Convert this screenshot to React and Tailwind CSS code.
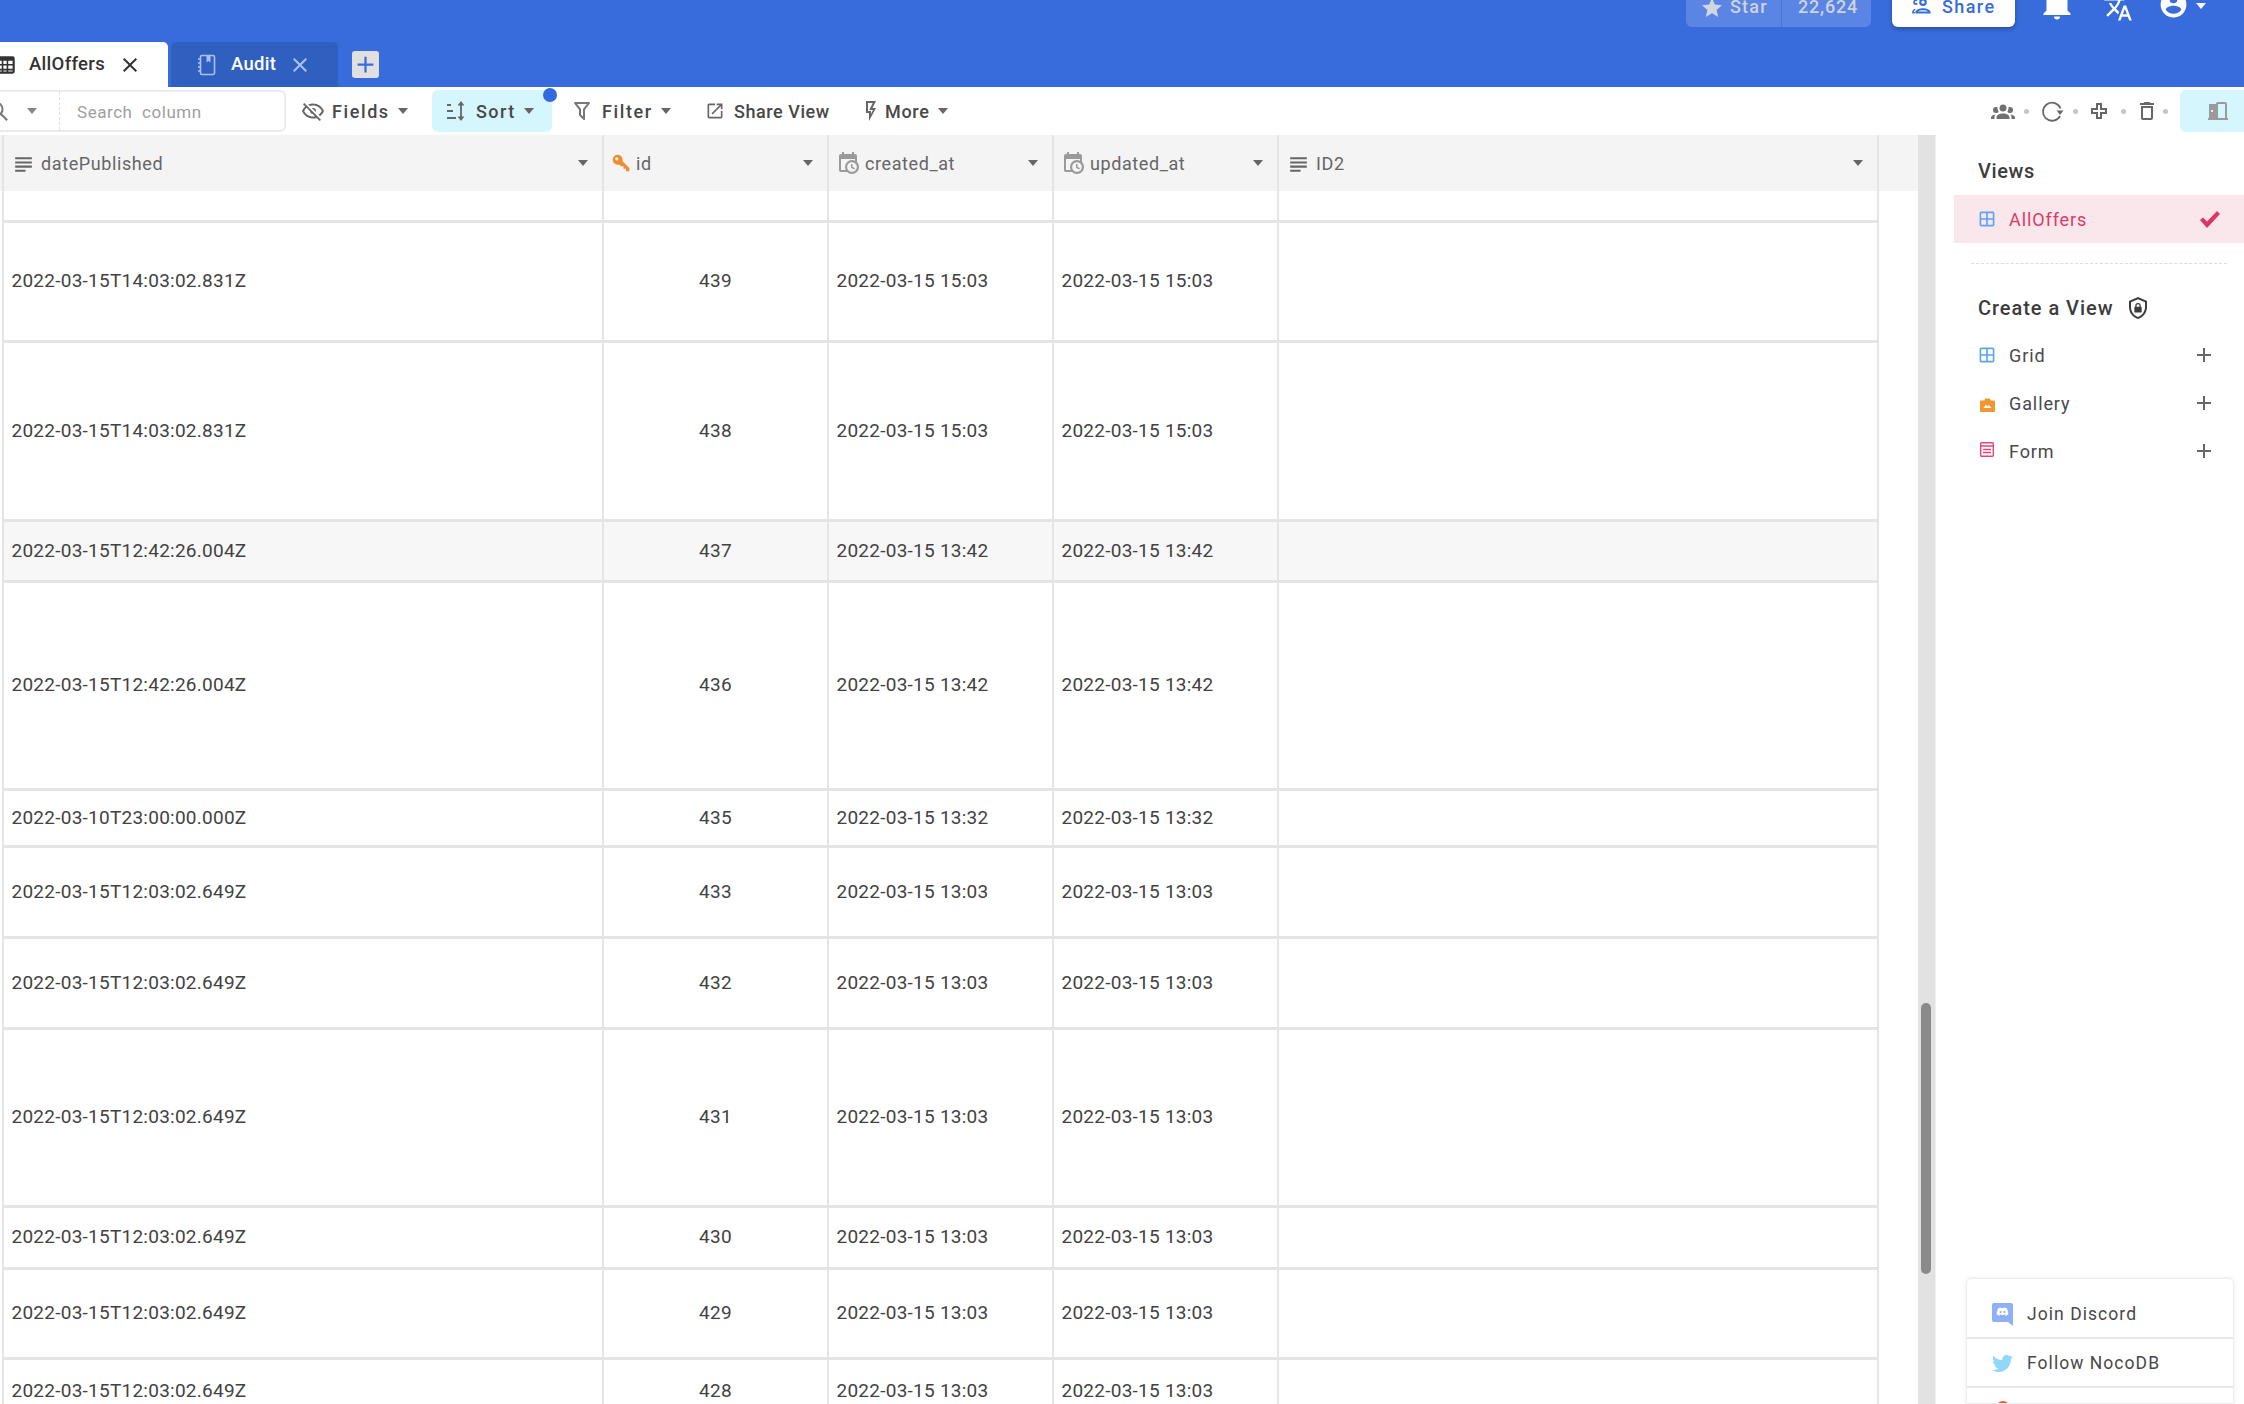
import React from "react";
import { FaTwitter } from "react-icons/fa";

const P = {
  text: "M4,6H20V8H4V6M4,10H20V12H4V10M4,14H20V16H4V14M4,18H14V20H4V18Z",
  key: "M22,18V22H18V19H15V16H12L9.74,13.74C9.19,13.91 8.61,14 8,14A6,6 0 0,1 2,8A6,6 0 0,1 8,2A6,6 0 0,1 14,8C14,8.61 13.91,9.19 13.74,9.74L22,18M7,5A2,2 0 0,0 5,7A2,2 0 0,0 7,9A2,2 0 0,0 9,7A2,2 0 0,0 7,5Z",
  cal: "M15,13H16.5V15.82L18.94,17.23L18.19,18.53L15,16.69V13M19,8H5V19H9.67C9.24,18.09 9,17.07 9,16A7,7 0 0,1 16,9C17.07,9 18.09,9.24 19,9.67V8M5,21C3.89,21 3,20.1 3,19V5C3,3.89 3.89,3 5,3H6V1H8V3H16V1H18V3H19A2,2 0 0,1 21,5V11.1C22.24,12.36 23,14.09 23,16A7,7 0 0,1 16,23C14.09,23 12.36,22.24 11.1,21H5M16,11.15A4.85,4.85 0 0,0 11.15,16C11.15,18.68 13.32,20.85 16,20.85A4.85,4.85 0 0,0 20.85,16C20.85,13.32 18.68,11.15 16,11.15Z",
  eye: "M2,5.27L3.28,4L20,20.72L18.73,22L15.65,18.92C14.5,19.3 13.28,19.5 12,19.5C7,19.5 2.73,16.39 1,12C1.69,10.24 2.79,8.69 4.19,7.46L2,5.27M12,9A3,3 0 0,1 15,12C15,12.35 14.94,12.69 14.83,13L11,9.17C11.31,9.06 11.65,9 12,9M12,4.5C17,4.5 21.27,7.61 23,12C22.18,14.08 20.79,15.88 19,17.19L17.58,15.76C18.94,14.82 20.06,13.54 20.82,12C19.17,8.64 15.76,6.5 12,6.5C10.91,6.5 9.84,6.68 8.84,7L7.3,5.47C8.74,4.85 10.33,4.5 12,4.5M3.18,12C4.83,15.36 8.24,17.5 12,17.5C12.69,17.5 13.37,17.43 14,17.29L11.72,15C10.29,14.85 9.15,13.71 9,12.28L5.6,8.87C4.61,9.72 3.78,10.78 3.18,12Z",
  filter: "M15,19.88C15.04,20.18 14.94,20.5 14.71,20.71C14.32,21.1 13.69,21.1 13.3,20.71L9.29,16.7C9.06,16.47 8.96,16.16 9,15.87V10.75L4.21,4.62C3.87,4.19 3.95,3.56 4.38,3.22C4.57,3.08 4.78,3 5,3H19C19.22,3 19.43,3.08 19.62,3.22C20.05,3.56 20.13,4.19 19.79,4.62L15,10.75V19.88M7.04,5L11,10.06V15.58L13,17.58V10.05L16.96,5H7.04Z",
  open: "M14,3V5H17.59L7.76,14.83L9.17,16.24L19,6.41V10H21V3M19,19H5V5H12V3H5C3.89,3 3,3.9 3,5V19A2,2 0 0,0 5,21H19A2,2 0 0,0 21,19V12H19V19Z",
  flash: "M7,2H17L13.5,9H17L10,22V14H7V2M9,4V12H12V14.66L14,11H10.24L13.76,4H9Z",
  group: "M12,5.5A3.5,3.5 0 0,1 15.5,9A3.5,3.5 0 0,1 12,12.5A3.5,3.5 0 0,1 8.5,9A3.5,3.5 0 0,1 12,5.5M5,8C5.56,8 6.08,8.15 6.53,8.42C6.38,9.85 6.8,11.27 7.66,12.38C7.16,13.34 6.16,14 5,14A3,3 0 0,1 2,11A3,3 0 0,1 5,8M19,8A3,3 0 0,1 22,11A3,3 0 0,1 19,14C17.84,14 16.84,13.34 16.34,12.38C17.2,11.27 17.62,9.85 17.47,8.42C17.92,8.15 18.44,8 19,8M5.5,18.25C5.5,16.18 8.41,14.5 12,14.5C15.59,14.5 18.5,16.18 18.5,18.25V20H5.5V18.25M0,20V18.5C0,17.11 1.89,15.94 4.45,15.6C3.86,16.28 3.5,17.22 3.5,18.25V20H0M24,20H20.5V18.25C20.5,17.22 20.14,16.28 19.55,15.6C22.11,15.94 24,17.11 24,18.5V20Z",
  plusO: "M4,9H9V4H15V9H20V15H15V20H9V15H4V9M11,6V11H6V13H11V18H13V13H18V11H13V6H11Z",
  trash: "M6,19A2,2 0 0,0 8,21H16A2,2 0 0,0 18,19V7H6V19M8,9H16V19H8V9M15.5,4L14.5,3H9.5L8.5,4H5V6H19V4H15.5Z",
  door: "M12,3C10.89,3 10,3.89 10,5H3V19H2V21H22V19H21V5C21,3.89 20.11,3 19,3H12M12,5H19V19H12V5M5,11H7V13H5V11Z",
  bell: "M21,19V20H3V19L5,17V11C5,7.9 7.03,5.17 10,4.29C10,4.19 10,4.1 10,4A2,2 0 0,1 12,2A2,2 0 0,1 14,4C14,4.1 14,4.19 14,4.29C16.97,5.17 19,7.9 19,11V17L21,19M14,21A2,2 0 0,1 10,21H14Z",
  translate: "M12.87,15.07L10.33,12.56L10.36,12.53C12.1,10.59 13.34,8.36 14.07,6H17V4H10V2H8V4H1V6H12.17C11.5,7.92 10.44,9.75 9,11.35C8.07,10.32 7.3,9.19 6.69,8H4.69C5.42,9.63 6.42,11.17 7.67,12.56L2.58,17.58L4,19L9,14L12.11,17.11L12.87,15.07M18.5,10H16.5L12,22H14L15.12,19H19.87L21,22H23L18.5,10M15.88,17L17.5,12.67L19.12,17H15.88Z",
  account: "M12,19.2C9.5,19.2 7.29,17.92 6,16C6.03,14 10,12.9 12,12.9C14,12.9 17.97,14 18,16C16.71,17.92 14.5,19.2 12,19.2M12,5A3,3 0 0,1 15,8A3,3 0 0,1 12,11A3,3 0 0,1 9,8A3,3 0 0,1 12,5M12,2A10,10 0 0,0 2,12A10,10 0 0,0 12,22A10,10 0 0,0 22,12A10,10 0 0,0 12,2Z",
  star: "M12,17.27L18.18,21L16.54,13.97L22,9.24L14.81,8.62L12,2L9.19,8.62L2,9.24L7.45,13.97L5.82,21L12,17.27Z",
  close: "M19,6.41L17.59,5L12,10.59L6.41,5L5,6.41L10.59,12L5,17.59L6.41,19L12,13.41L17.59,19L19,17.59L13.41,12L19,6.41Z",
  plus: "M19,13H13V19H11V13H5V11H11V5H13V11H19V13Z",
  grid: "M5,3H19A2,2 0 0,1 21,5V19A2,2 0 0,1 19,21H5A2,2 0 0,1 3,19V5A2,2 0 0,1 5,3M5,5V11H11V5H5M13,5V11H19V5H13M5,13V19H11V13H5M13,13V19H19V13H13Z",
  table: "M5,4H19A2,2 0 0,1 21,6V18A2,2 0 0,1 19,20H5A2,2 0 0,1 3,18V6A2,2 0 0,1 5,4M5,8V11H9V8H5M10.5,8V11H13.5V8H10.5M15,8V11H19V8H15M5,12.5V15.5H9V12.5H5M10.5,12.5V15.5H13.5V12.5H10.5M15,12.5V15.5H19V12.5H15M5,17V18H9V17H5M10.5,17V18H13.5V17H10.5M15,17V18H19V17H15Z",
  shield: "M12,1L3,5V11C3,16.55 6.84,21.74 12,23C17.16,21.74 21,16.55 21,11V5L12,1M19,11C19,15.52 16.02,19.69 12,20.93C7.98,19.69 5,15.52 5,11V6.3L12,3.19L19,6.3V11Z",
  lock: "M15,10.5V9.5A3,3 0 0,0 9,9.5V10.5A1,1 0 0,0 8,11.5V16A1,1 0 0,0 9,17H15A1,1 0 0,0 16,16V11.5A1,1 0 0,0 15,10.5M13.6,10.5H10.4V9.5A1.6,1.6 0 0,1 13.6,9.5V10.5Z",
  shareGroup: "M12,5A3.5,3.5 0 0,0 8.5,8.5A3.5,3.5 0 0,0 12,12A3.5,3.5 0 0,0 15.5,8.5A3.5,3.5 0 0,0 12,5M12,7A1.5,1.5 0 0,1 13.5,8.5A1.5,1.5 0 0,1 12,10A1.5,1.5 0 0,1 10.5,8.5A1.5,1.5 0 0,1 12,7M5.5,6A2.5,2.5 0 0,0 3,8.5A2.5,2.5 0 0,0 5.5,11A2.5,2.5 0 0,0 7,10.4L6.4,9C6.2,9.2 5.9,9.4 5.5,9.4A1,1 0 0,1 4.5,8.4A1,1 0 0,1 5.5,7.4L6.5,7.4L6.9,6.4C6.5,6.1 6,6 5.5,6M12,14C9.66,14 5,15.17 5,17.5V19H19V17.5C19,15.17 14.34,14 12,14M7.29,17C8.13,16.5 10.06,16 12,16C13.94,16 15.87,16.5 16.71,17H7.29ZM2,19V17.5C2,16.2 3,15.2 4.4,14.5L5.2,15.6C4.3,16 3.5,16.7 3.5,17.5H4.5V19H2Z",
};

const Ic = ({ d, className }) => (
  <svg viewBox="0 0 24 24" fill="currentColor" className={`shrink-0 ${className}`}>
    <path d={d} />
  </svg>
);

const Caret = ({ className }) => (
  <svg viewBox="0 0 10 6" fill="currentColor" className={`shrink-0 w-[10px] h-[6px] ${className}`}>
    <path d="M0,0H10L5,6Z" />
  </svg>
);

const rows = [
  [32, "", "", "", false],
  [120, "2022-03-15T14:03:02.831Z", "439", "2022-03-15 15:03", false],
  [179, "2022-03-15T14:03:02.831Z", "438", "2022-03-15 15:03", false],
  [61, "2022-03-15T12:42:26.004Z", "437", "2022-03-15 13:42", true],
  [208, "2022-03-15T12:42:26.004Z", "436", "2022-03-15 13:42", false],
  [57, "2022-03-10T23:00:00.000Z", "435", "2022-03-15 13:32", false],
  [91, "2022-03-15T12:03:02.649Z", "433", "2022-03-15 13:03", false],
  [91, "2022-03-15T12:03:02.649Z", "432", "2022-03-15 13:03", false],
  [178, "2022-03-15T12:03:02.649Z", "431", "2022-03-15 13:03", false],
  [62, "2022-03-15T12:03:02.649Z", "430", "2022-03-15 13:03", false],
  [90, "2022-03-15T12:03:02.649Z", "429", "2022-03-15 13:03", false],
  [65, "2022-03-15T12:03:02.649Z", "428", "2022-03-15 13:03", false],
];

const cellBase = "h-full flex items-center border-r-2 border-[#e5e5e7] shrink-0 text-[19px] tracking-[0.25px] text-[#424242] pl-[7.5px]";

function HeadCell({ width, icon, iconClass, label }) {
  return (
    <div className={`${width} h-full flex items-center border-r-2 border-[#e5e5e7] shrink-0 pl-[8px] pr-[14px]`}>
      <div className="flex items-center flex-1 gap-[5px]">
        <Ic d={icon} className={iconClass} />
        <span className="text-[18px] tracking-[0.6px] text-[#666666]">{label}</span>
      </div>
      <Caret className="text-[#666666]" />
    </div>
  );
}

function ToolBtn({ icon, iconClass, label, textClass, caret = true, className = "" }) {
  return (
    <div className={`flex items-center h-[42px] shrink-0 ${className}`}>
      <Ic d={icon} className={iconClass} />
      <span className={`text-[18px] font-medium text-[#484848] ${textClass}`}>{label}</span>
      {caret && <Caret className="ml-[8px] text-[#666666]" />}
    </div>
  );
}

const Dot = ({ className }) => <div className={`w-[5px] h-[5px] rounded-full bg-[#c4c4c4] shrink-0 ${className}`} />;

function ViewRow({ icon, label }) {
  return (
    <div className="h-[48px] flex items-center pl-[24px] pr-[32px] justify-between">
      <div className="flex items-center gap-[13px]">
        {icon}
        <span className="text-[18px] tracking-[0.9px] text-[#484848]">{label}</span>
      </div>
      <Ic d={P.plus} className="w-[24px] h-[24px] text-[#666666] -mr-[4px]" />
    </div>
  );
}

export default function App() {
  return (
    <div className="w-[2244px] h-[1404px] overflow-hidden bg-white flex flex-col font-['Roboto',sans-serif]">
      {/* Blue header */}
      <header className="h-[87px] shrink-0 bg-[#386cdd] flex flex-col justify-between overflow-hidden">
        <div className="h-[27px] flex justify-end items-end pr-[38px]">
          <div className="h-[40px] w-[185px] rounded-[6px] bg-[#5a85e4] flex items-center shrink-0">
            <div className="w-[96px] h-full border-r border-[#4a74cf] flex items-end pb-[8px] pl-[14px] gap-[6px]">
              <Ic d={P.star} className="w-[24px] h-[24px] text-[#d2d6de] mb-[-1px]" />
              <span className="text-[18px] font-medium tracking-[1.2px] text-[#ced3dd] leading-[24px]">Star</span>
            </div>
            <div className="flex-1 h-full flex items-end pb-[8px] pl-[16px]">
              <span className="text-[18px] font-medium tracking-[0.8px] text-[#ced3dd] leading-[24px]">22,624</span>
            </div>
          </div>
          <div className="ml-[21px] h-[40px] w-[123px] rounded-[6px] bg-white shadow-[0_2px_4px_rgba(0,0,0,0.3)] flex items-end pb-[8px] pl-[18px] gap-[6px] shrink-0">
            <Ic d={P.shareGroup} className="w-[26px] h-[26px] text-[#386cdd]" />
            <span className="text-[18px] font-medium tracking-[1.4px] text-[#386cdd] leading-[24px]">Share</span>
          </div>
          <Ic d={P.bell} className="w-[36px] h-[36px] text-white ml-[24px] mb-[6px]" />
          <Ic d={P.translate} className="w-[30px] h-[30px] text-white ml-[28px] mb-[4px]" />
          <Ic d={P.account} className="w-[31px] h-[31px] text-white ml-[25px] mb-[7px]" />
          <Caret className="ml-[7px] mb-[18px] text-white" />
        </div>
        <div className="h-[45px] flex items-stretch">
          <div className="w-[168px] shrink-0 bg-white rounded-tr-[5px] flex items-center">
            <Ic d={P.table} className="w-[26px] h-[26px] text-[#333333] -ml-[8px]" />
            <span className="ml-[11px] text-[18.5px] font-medium tracking-[0.3px] text-[#333333]">AllOffers</span>
            <Ic d={P.close} className="ml-[13px] w-[24px] h-[24px] text-[#333333]" />
          </div>
          <div className="ml-[3px] w-[167px] shrink-0 bg-[#2f60c0] rounded-t-[5px] flex items-center pl-[26px]">
            <svg viewBox="0 0 20 22" className="w-[20px] h-[22px] shrink-0 text-[#a9c0ef]" fill="none" stroke="currentColor" strokeWidth="1.6">
              <rect x="3.5" y="1.5" width="14" height="19" rx="1.5" />
              <path d="M1,5h3M1,9h3M1,13h3M1,17h3" />
              <path d="M9.5,1.5v7l2-1.5 2,1.5v-7" fill="currentColor" stroke="none" />
            </svg>
            <span className="ml-[14px] text-[18.5px] font-medium tracking-[0.3px] text-white">Audit</span>
            <Ic d={P.close} className="ml-[12px] w-[24px] h-[24px] text-[#a9c0ef]" />
          </div>
          <div className="ml-[14px] mt-[9px] w-[27px] h-[27px] rounded-[3px] bg-[#e0e0e0] flex items-center justify-center shrink-0">
            <Ic d={P.plus} className="w-[27px] h-[27px] text-[#386cdd]" />
          </div>
        </div>
      </header>

      {/* Toolbar */}
      <div className="h-[48px] shrink-0 flex items-center justify-between">
        <div className="flex items-center">
          <div className="w-[286px] h-[42px] rounded-r-[6px] border-2 border-l-0 border-[#ebebeb] flex items-center overflow-hidden shrink-0">
            <svg viewBox="0 0 24 24" className="w-[22px] h-[22px] -ml-[13px] shrink-0 text-[#777777]" fill="none" stroke="currentColor" strokeWidth="2.2">
              <circle cx="10" cy="10" r="7" />
              <path d="M15,15L22,22" />
            </svg>
            <Caret className="ml-[18px] text-[#888888]" />
            <div className="ml-[22px] h-full border-l border-dashed border-[#e0e0e0] flex items-center pl-[17px] pt-[4px]">
              <span className="text-[17px] tracking-[0.55px] text-[#9e9e9e] whitespace-pre">Search  column</span>
            </div>
          </div>
          <ToolBtn icon={P.eye} iconClass="w-[24px] h-[24px] text-[#666666] mr-[7px]" label="Fields" textClass="tracking-[1.6px]" className="ml-[15px] w-[115px]" />
          <div className="relative ml-[16px] w-[120px] h-[42px] rounded-[6px] bg-[#d5f6fd] flex items-center pl-[14px] shrink-0">
            <svg viewBox="0 0 18 20" className="w-[20px] h-[20px] shrink-0 text-[#666666] mr-[10px]" fill="currentColor">
              <path d="M0,3h4v2H0zM0,9h6v2H0zM0,16h9v2H0z" />
              <path d="M14,0l3.4,4.5h-2.5v11h2.5L14,20l-3.4-4.5h2.5v-11h-2.5z" />
            </svg>
            <span className="text-[18px] font-medium tracking-[1.45px] text-[#484848]">Sort</span>
            <Caret className="ml-[8px] text-[#666666]" />
            <span className="absolute -top-[2px] -right-[5px] w-[14px] h-[14px] rounded-full bg-[#2f6ae0]" />
          </div>
          <ToolBtn icon={P.filter} iconClass="w-[24px] h-[24px] text-[#777777] mr-[8px]" label="Filter" textClass="tracking-[1.6px]" className="ml-[18px] w-[135px]" />
          <ToolBtn icon={P.open} iconClass="w-[20px] h-[20px] text-[#666666] mr-[9px]" label="Share View" textClass="tracking-[0.55px]" caret={false} className="w-[154px]" />
          <ToolBtn icon={P.flash} iconClass="w-[24px] h-[24px] text-[#666666] mr-[2px]" label="More" textClass="tracking-[0.7px]" />
        </div>
        <div className="flex items-center">
          <Ic d={P.group} className="w-[24px] h-[24px] text-[#707070]" />
          <Dot className="ml-[9px]" />
          <svg viewBox="0 0 24 24" className="ml-[11px] w-[24px] h-[24px] shrink-0 text-[#666666]" fill="none" stroke="currentColor" strokeWidth="1.8">
            <path d="M20.5,9.5A9,9 0 1,0 20,17" />
            <path d="M23.5,11.5h-7l3.5,4.5z" fill="currentColor" stroke="none" />
          </svg>
          <Dot className="ml-[9px]" />
          <Ic d={P.plusO} className="ml-[9px] w-[24px] h-[24px] text-[#666666]" />
          <Dot className="ml-[10px]" />
          <Ic d={P.trash} className="ml-[9px] w-[24px] h-[24px] text-[#666666]" />
          <Dot className="ml-[4px]" />
          <div className="ml-[12px] w-[64px] h-[42px] rounded-l-[6px] bg-[#d5f6fd] flex items-center pl-[26px] shrink-0">
            <Ic d={P.door} className="w-[24px] h-[24px] text-[#9a9a9a]" />
          </div>
        </div>
      </div>

      {/* Main */}
      <div className="flex-1 min-h-0 flex">
        {/* Grid */}
        <div className="w-[1918px] shrink-0 overflow-hidden flex flex-col">
          <div className="h-[56px] shrink-0 bg-[#f4f4f4] flex pl-[2px]">
            <div className="flex h-full border-l-2 border-[#e5e5e7]">
              <HeadCell width="w-[600px]" icon={P.text} iconClass="w-[25px] h-[25px] text-[#666666] ml-[-1px]" label="datePublished" />
              <HeadCell width="w-[225px]" icon={P.key} iconClass="w-[20px] h-[20px] text-[#ef8d32] ml-[-1px]" label="id" />
              <HeadCell width="w-[225px]" icon={P.cal} iconClass="w-[24px] h-[24px] text-[#9a9a9a] ml-[-1px]" label="created_at" />
              <HeadCell width="w-[225px]" icon={P.cal} iconClass="w-[24px] h-[24px] text-[#9a9a9a] ml-[-1px]" label="updated_at" />
              <HeadCell width="w-[600px]" icon={P.text} iconClass="w-[25px] h-[25px] text-[#666666] ml-[-1px]" label="ID2" />
            </div>
          </div>
          {rows.map(([h, date, id, ts, shaded], i) => (
            <div key={i} className="shrink-0 flex pl-[2px]" style={{ height: h }}>
              <div className={`flex h-full border-l-2 border-[#e5e5e7] ${shaded ? "bg-[#f7f7f7]" : "bg-white"}`}>
                <div className="flex flex-col w-[1875px] h-full">
                  <div className="flex flex-1 min-h-0">
                    <div className={`${cellBase} w-[600px]`}>{date}</div>
                    <div className={`${cellBase} w-[225px] justify-center !pl-0`}>{id}</div>
                    <div className={`${cellBase} w-[225px]`}>{ts}</div>
                    <div className={`${cellBase} w-[225px]`}>{ts}</div>
                    <div className={`${cellBase} w-[600px]`}></div>
                  </div>
                  <div className="h-[3px] bg-[#e5e5e7] shrink-0" />
                </div>
              </div>
            </div>
          ))}
        </div>

        {/* Scrollbar */}
        <div className="w-[17px] shrink-0 bg-[#e2e2e2] pt-[868px] px-[3px]">
          <div className="w-[10px] h-[271px] rounded-[5px] bg-[#8a8a8a]" />
        </div>

        {/* Sidebar */}
        <aside className="flex-1 min-w-0 border-l border-[#f0f0f0] flex flex-col pl-[18px] overflow-hidden">
          <div className="h-[60px] flex items-end pb-[10px] pl-[24px] shrink-0">
            <span className="text-[20px] font-medium tracking-[0.6px] text-[#3c3c3c] leading-[28px]">Views</span>
          </div>
          <div className="h-[48px] bg-[#f9e7ec] flex items-center justify-between pl-[24px] pr-[24px] shrink-0">
            <div className="flex items-center gap-[13px]">
              <Ic d={P.grid} className="w-[18px] h-[18px] text-[#5ea3f4] scale-[1.1]" />
              <span className="text-[18px] tracking-[0.9px] text-[#e0386a]">AllOffers</span>
            </div>
            <svg viewBox="0 0 20 17" className="w-[20px] h-[17px] shrink-0 text-[#dd3565]" fill="currentColor">
              <path d="M0,9L3,6.5L7,10.5L17,0L20,3L7,17Z" />
            </svg>
          </div>
          <div className="mt-[20px] ml-[17px] mr-[17px] border-t border-dashed border-[#dcdcdc] shrink-0" />
          <div className="mt-[23px] h-[42px] flex items-center pl-[24px] gap-[14px] shrink-0">
            <span className="text-[20px] font-medium tracking-[0.95px] text-[#3c3c3c]">Create a View</span>
            <span className="relative w-[22px] h-[24px] shrink-0 text-[#3c3c3c]">
              <Ic d={P.shield} className="w-[24px] h-[24px] -ml-[1px]" />
              <Ic d={P.lock} className="absolute left-0 top-0 w-[22px] h-[22px] mt-[1px]" />
            </span>
          </div>
          <div className="mt-[2px] shrink-0">
            <ViewRow label="Grid" icon={<Ic d={P.grid} className="w-[18px] h-[18px] text-[#5ea3f4] scale-[1.1]" />} />
            <ViewRow
              label="Gallery"
              icon={
                <svg viewBox="0 0 15 14" className="w-[15px] h-[14px] shrink-0 mx-[1.5px] mt-[3px]" fill="#f0982e">
                  <path d="M1,2.5H4.5L5,0.5H10L10.5,2.5H14A1,1 0 0,1 15,3.5V13A1,1 0 0,1 14,14H1A1,1 0 0,1 0,13V3.5A1,1 0 0,1 1,2.5Z" />
                  <path d="M3.5,10L6,6.5L7.5,8.5L9,7L11.5,10Z" fill="#fff" />
                </svg>
              }
            />
            <ViewRow
              label="Form"
              icon={
                <svg viewBox="0 0 14 15" className="w-[14px] h-[15px] shrink-0 mx-[2px] mb-[4px]" fill="none" stroke="#e4467a" strokeWidth="1.4">
                  <rect x="0.7" y="0.7" width="12.6" height="13.6" rx="1" />
                  <path d="M1,4H13M3,7.5H11M3,10.5H11" />
                </svg>
              }
            />
          </div>
          <div className="mt-auto ml-[12px] mr-[10px] rounded-t-[5px] border border-[#eeeeee] shadow-[0_0_5px_rgba(0,0,0,0.08)] h-[126px] shrink-0 bg-white overflow-hidden">
            <div className="h-[60px] pt-[12px] border-b-2 border-[#e8e8e8] flex items-center pl-[25px] gap-[14px]">
              <svg viewBox="0 0 21 23" className="w-[21px] h-[23px] shrink-0">
                <path d="M2,0H19A2,2 0 0,1 21,2V23L16,19H2A2,2 0 0,1 0,17V2A2,2 0 0,1 2,0Z" fill="#8fb0f5" />
                <path d="M14.6,5.2A10,10 0 0,0 12.4,4.5L12.1,5.1A9,9 0 0,0 8.9,5.1L8.6,4.5A10,10 0 0,0 6.4,5.2C5,7.3 4.6,9.4 4.8,11.4A10,10 0 0,0 7.5,12.8L8.1,11.8A6,6 0 0,1 7.2,11.4L7.4,11.2A7,7 0 0,0 13.6,11.2L13.8,11.4A6,6 0 0,1 12.9,11.8L13.5,12.8A10,10 0 0,0 16.2,11.4C16.5,9.1 15.9,7 14.6,5.2ZM8.6,10.2C8,10.2 7.6,9.7 7.6,9S8,7.9 8.6,7.9 9.6,8.4 9.6,9 9.2,10.2 8.6,10.2ZM12.4,10.2C11.8,10.2 11.4,9.7 11.4,9S11.8,7.9 12.4,7.9 13.4,8.4 13.4,9 13,10.2 12.4,10.2Z" fill="#fff" />
              </svg>
              <span className="text-[17.5px] tracking-[1.05px] text-[#484848]">Join Discord</span>
            </div>
            <div className="h-[49px] pt-[1px] border-b-2 border-[#e8e8e8] flex items-center pl-[25px] gap-[14px]">
              <FaTwitter className="w-[21px] h-[21px] text-[#93d6fb] shrink-0" />
              <span className="text-[17.5px] tracking-[1.05px] text-[#484848]">Follow NocoDB</span>
            </div>
            <div className="pl-[29px] pt-[13px]">
              <span className="block w-[14px] h-[14px] rounded-full bg-[#ea5a3c]" />
            </div>
          </div>
        </aside>
      </div>
    </div>
  );
}
